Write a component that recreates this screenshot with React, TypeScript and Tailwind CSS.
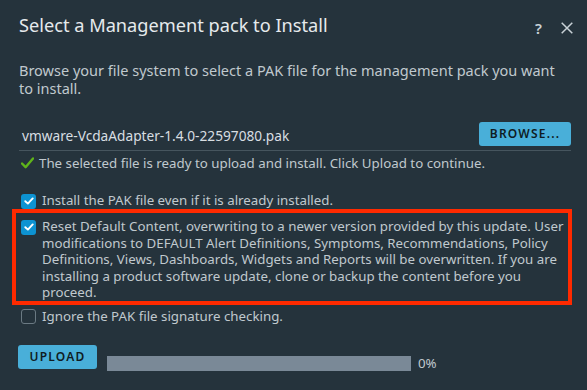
import React from "react";

function CheckBox({ checked }: { checked: boolean }) {
  if (!checked) {
    return (
      <span className="mt-[1.5px] inline-block h-[15px] w-[15px] shrink-0 rounded-[3px] border-[1.5px] border-[#6b7a83]" />
    );
  }
  return (
    <span className="mt-[1.5px] flex h-[15px] w-[15px] shrink-0 items-center justify-center rounded-[3px] bg-[#0d93d2]">
      <svg width="10" height="8" viewBox="0 0 10 8" fill="none">
        <path d="M1.3 4.2 L3.9 6.6 L8.7 1.4" stroke="#ffffff" strokeWidth="1.9" strokeLinecap="round" strokeLinejoin="round" />
      </svg>
    </span>
  );
}

export default function App() {
  return (
    <div className="h-[390px] w-[587px] overflow-hidden bg-[#25333c] font-['Noto_Sans',sans-serif] text-[13.3px] text-[#c0c9ce]">
      {/* header */}
      <div className="flex items-start justify-between pl-[19px] pr-[14px] pt-[12px]">
        <h2 className="text-[18.2px] leading-[26px] text-[#e6eaec]">Select a Management pack to Install</h2>
        <div className="flex items-center gap-[19px] pt-[10px] text-[#c9d2d7]">
          <span className="text-[15px] font-semibold leading-[12px]">?</span>
          <svg width="12" height="12" viewBox="0 0 12 12">
            <path d="M0.7 0.7 L11.3 11.3 M11.3 0.7 L0.7 11.3" stroke="#c9d2d7" strokeWidth="1.5" />
          </svg>
        </div>
      </div>

      <p className="mt-[23px] pl-[19px] pr-[24px] text-[14.5px] leading-[18px]">
        Browse your file system to select a PAK file for the management pack you want to install.
      </p>

      {/* file row */}
      <div className="ml-[19px] mr-[16px] mt-[25px] flex items-end justify-between border-b border-[#46555e] pb-[4px]">
        <span className="pl-[3px] text-[13.7px] leading-[20px] text-[#d8dee2]">vmware-VcdaAdapter-1.4.0-22597080.pak</span>
        <button className="h-[24px] w-[92px] rounded-[3px] bg-[#49afd9] text-[12px] font-semibold tracking-[0.1em] text-[#0f1c23]">
          BROWSE...
        </button>
      </div>

      <div className="mt-[2px] flex items-center gap-[5px] pl-[21px] leading-[20px]">
        <svg width="13" height="12" viewBox="0 0 13 12">
          <path d="M1 6.5 L4.6 10.2 L12 1.5" stroke="#5fb41a" strokeWidth="2.4" fill="none" strokeLinecap="round" strokeLinejoin="round" />
        </svg>
        <span>The selected file is ready to upload and install. Click Upload to continue.</span>
      </div>

      <div className="mt-[19px] flex items-start gap-[6px] pl-[21px] leading-[17px]">
        <CheckBox checked />
        <span>Install the PAK file even if it is already installed.</span>
      </div>

      {/* highlighted option */}
      <div className="ml-[12px] mr-[15px] border-[4px] border-[#ff2a00] pb-0 pl-[5px] pr-[2px] pt-[5px]">
        <div className="flex items-start gap-[6px] leading-[16.5px]">
          <CheckBox checked />
          <span>
            Reset Default Content, overwriting to a newer version provided by this update. User modifications to DEFAULT
            Alert Definitions, Symptoms, Recommendations, Policy Definitions, Views, Dashboards, Widgets and Reports will
            be overwritten. If you are installing a product software update, clone or backup the content before you
            proceed.
          </span>
        </div>
      </div>

      <div className="mt-[3px] flex items-start gap-[6px] pl-[21px] leading-[17px]">
        <CheckBox checked={false} />
        <span>Ignore the PAK file signature checking.</span>
      </div>

      {/* upload row */}
      <div className="mt-[20px] flex items-start pl-[18px]">
        <button className="h-[24px] w-[79px] rounded-[3px] bg-[#49afd9] text-[12px] font-semibold tracking-[0.1em] text-[#0f1c23]">
          UPLOAD
        </button>
        <div className="ml-[10px] mt-[11px] h-[15px] w-[304px] bg-[#7a8997]" />
        <span className="ml-[7px] mt-[10px] leading-[17px]">0%</span>
      </div>
    </div>
  );
}
